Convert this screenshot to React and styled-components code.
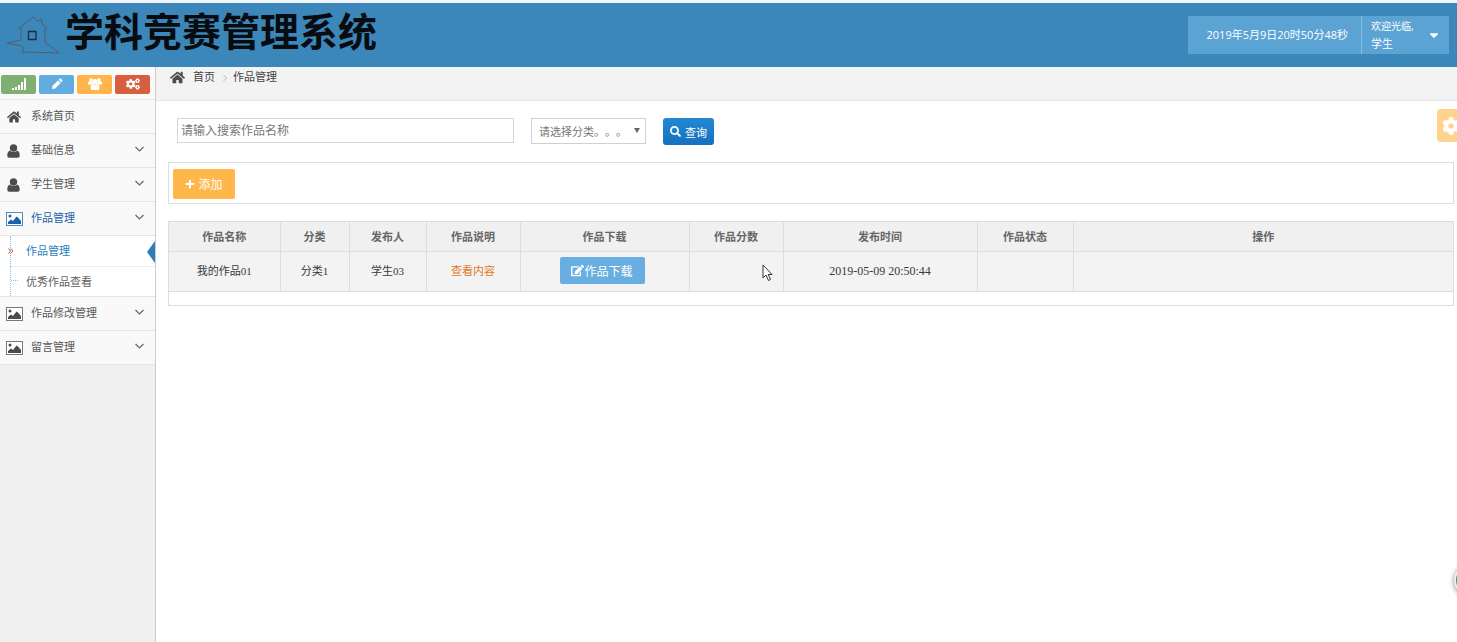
import React from 'react'
import styled, { createGlobalStyle, css } from 'styled-components'
import { FaCogs, FaCog, FaHome, FaSearch, FaPlus, FaEdit, FaCaretDown } from 'react-icons/fa'

const GlobalStyle = createGlobalStyle`
    * { box-sizing: border-box; }
    body {
        margin: 0;
        overflow-x: hidden;
        background: #fff;
        color: #393939;
        font: 11px/18px "Open Sans", "Noto Sans CJK SC", sans-serif;
    }
    button, input, select { font-family: inherit; }
    a { color: inherit; text-decoration: none; }
    svg { display: block; flex: none; }
`

const PageStyle = styled.div`
    display: flex;
    flex-direction: column;
    min-height: 100vh;
    border-top: 3px solid #f1f5f7;
`

const HeaderStyle = styled.header`
    display: flex;
    justify-content: space-between;
    align-items: center;
    height: 64px;
    padding: 0 8px 0 6px;
    background: #3b87b9;
`
const BrandStyle = styled.a`
    display: flex;
    align-items: center;
    gap: 5px;
`
const TitleStyle = styled.h1`
    margin: 0 0 12px;
    color: #080b10;
    font: bold 39px/44px "Noto Sans CJK SC", sans-serif;
`
const HeaderInfoStyle = styled.div`
    display: flex;
    height: 38px;
    color: #fff;
`
const ClockStyle = styled.div`
    display: flex;
    align-items: center;
    padding: 0 13px 0 19px;
    border-right: 1px solid #7ec3ea;
    background: #5ba3d3;
`
const UserButtonStyle = styled.button`
    display: flex;
    align-items: center;
    justify-content: space-between;
    width: 87px;
    padding: 0 8px 0 9px;
    border: 0;
    background: #5ba3d3;
    color: #fff;
    font-size: 11px;
    line-height: 18px;
    text-align: left;
`
const WelcomeStyle = styled.small`
    display: block;
    font-size: 10px;
`

const BodyStyle = styled.div`
    flex: 1;
    display: flex;
`
const SidebarStyle = styled.aside`
    flex: 0 0 156px;
    border-right: 1px solid #ccc;
    background: #f0f0f0;
`
const ShortcutsStyle = styled.div`
    display: flex;
    align-items: center;
    gap: 3px;
    height: 33px;
    padding: 2px 0 0 1px;
    border-bottom: 1px solid #e5e5e5;
    background: #fafafa;
`
const ShortcutStyle = styled.button`
    display: flex;
    align-items: center;
    justify-content: center;
    width: 35px;
    height: 19px;
    padding: 0;
    border: 0;
    border-radius: 2px;
    background: ${props => props.$color};
    color: #fff;
`

const MenuStyle = styled.ul`
    margin: 0;
    padding: 0;
    list-style: none;
`
const MenuLinkStyle = styled.a`
    display: flex;
    align-items: center;
    height: 33px;
    padding: 0 10px 2px 6px;
    background: #f9f9f9;
    color: #585858;
    ${props => props.$active && css`
        color: #1963aa;
    `}
`
const MenuItemStyle = styled.li`
    border-bottom: 1px solid #e5e5e5;
`
const MenuIconStyle = styled.span`
    flex: 0 0 25px;
    padding-left: ${props => props.$wide ? 0 : 1}px;
    padding-top: 3px;
    color: ${props => props.$active ? '#1963aa' : '#4c4c4c'};
    font-size: 14px;
`
const MenuTextStyle = styled.span`
    flex: 1;
`
const SubmenuStyle = styled.ul`
    margin: 0;
    padding: 0 0 0 10px;
    border-top: 1px solid #e5e5e5;
    background: #fff;
    list-style: none;
`
const SubItemStyle = styled.li`
    position: relative;
    border-left: 1px dotted #8fc3e6;

    & + & a {
        border-top: 1px solid #eee;
    }
`
const SubLinkStyle = styled.a`
    display: flex;
    align-items: center;
    height: 30px;
    padding-left: 15px;
    color: ${props => props.$active ? '#2b7dbc' : '#616161'};
`
const SubMarkStyle = styled.span`
    position: absolute;
    left: -3px;
    top: 12px;
    color: #c86139;
`
const SubDashStyle = styled.span`
    position: absolute;
    left: 0;
    top: 14px;
    width: 7px;
    border-top: 1px dotted #8fc3e6;
`
const ActiveArrowStyle = styled.span`
    position: absolute;
    right: 0;
    top: 5px;
    border: solid transparent;
    border-width: 11px 8px 11px 0;
    border-right-color: #2b7dbc;
`

const MainStyle = styled.main`
    flex: 1;
    min-width: 0;
`
const BreadcrumbStyle = styled.nav`
    display: flex;
    align-items: flex-start;
    height: 34px;
    padding: 1px 14px;
    border-bottom: 1px solid #e5e5e5;
    background: #f4f3f4;
    color: #444;
`
const CrumbIconStyle = styled.span`
    padding: 2px 8px 0 0;
    color: #4c4c4c;
    font-size: 15px;
`
const CrumbSepStyle = styled.span`
    padding: 6px 6px 0 8px;
    color: #b2b6bf;
`
const ContentStyle = styled.div`
    padding: 17px 3px 0 12px;
`
const SearchFormStyle = styled.form`
    display: flex;
    align-items: flex-start;
    gap: 17px;
    height: 27px;
    margin: 0 0 17px 9px;
`
const SearchInputStyle = styled.input`
    width: 337px;
    height: 25px;
    padding: 0 3px;
    border: 1px solid #d5d5d5;
    background: #fff;
    font-size: 12px;

    &::placeholder {
        color: #777;
        opacity: 1;
    }
`
const SelectWrapStyle = styled.div`
    position: relative;
`
const SelectStyle = styled.select`
    display: block;
    width: 115px;
    height: 26px;
    padding: 0 7px;
    border: 1px solid #d0d0d0;
    border-radius: 0;
    background: #fff;
    color: #777;
    font-size: 11px;
    text-spacing-trim: space-all;
    appearance: none;
`
const SelectArrowStyle = styled.span`
    position: absolute;
    right: 6px;
    top: 10px;
    border: solid transparent;
    border-width: 5px 3px 0;
    border-top-color: #666;
    pointer-events: none;
`
const QueryButtonStyle = styled.button`
    display: flex;
    align-items: center;
    gap: 4px;
    height: 27px;
    padding: 0 7px;
    border: 0;
    border-radius: 3px;
    background: linear-gradient(#2389d4, #1670bd);
    color: #fff;
    font-size: 11px;
`
const ToolbarStyle = styled.div`
    height: 42px;
    margin-bottom: 17px;
    padding: 6px 4px;
    border: 1px solid #ddd;
`
const AddButtonStyle = styled.button`
    display: flex;
    align-items: center;
    justify-content: center;
    gap: 3px;
    width: 62px;
    height: 30px;
    padding: 0;
    border: 0;
    border-radius: 2px;
    background: #ffb74b;
    color: #fff;
    font-size: 12px;
`

const TableBoxStyle = styled.div`
    padding-bottom: 13px;
    border: 1px solid #ddd;
`
const TableStyle = styled.table`
    width: 100%;
    table-layout: fixed;
    border-collapse: collapse;
    font-family: "Liberation Serif", "Noto Sans CJK SC", serif;
    text-align: center;
`
const ColStyle = styled.col`
    width: ${props => props.$width};
`
const HeadCellStyle = styled.th`
    height: 29px;
    padding: 0;
    border: 1px solid #ddd;
    border-width: 0 0 1px 1px;
    background: #f0f0f0;
    color: #666;
    font: bold 11px/18px "Noto Sans CJK SC", sans-serif;

    &:first-child { border-left: 0; }
`
const CellStyle = styled.td`
    height: 40px;
    padding: 0 0 1px;
    border: 1px solid #ddd;
    border-width: 0 0 1px 1px;
    background: #f3f3f3;
    font-size: ${props => props.$time ? 12 : 11}px;

    &:first-child { border-left: 0; }
`
const ViewLinkStyle = styled.a`
    color: #e0791f;
`
const DownloadButtonStyle = styled.button`
    display: inline-flex;
    align-items: center;
    height: 27px;
    margin-right: 4px;
    padding: 0 12px 0 11px;
    border: 0;
    border-radius: 2px;
    background: #68aee0;
    color: #fff;
    font: 12px/18px "Noto Sans CJK SC", sans-serif;
    vertical-align: middle;
`

const SettingsTabStyle = styled.button`
    position: absolute;
    right: 0;
    top: 109px;
    width: 20px;
    height: 33px;
    padding: 0 0 0 5px;
    border: 0;
    border-radius: 4px 0 0 4px;
    overflow: hidden;
    background: #ffd28e;
    color: #fff;
    font-size: 18px;
`
const FloatBallStyle = styled.div`
    position: fixed;
    right: -31px;
    top: 563px;
    width: 34px;
    height: 34px;
    border: 2px solid #eee;
    border-radius: 50%;
    background: #1fa073;
    box-shadow: 0 1px 5px #888;
`
const PointerStyle = styled.svg`
    position: absolute;
    left: 762px;
    top: 264px;
    pointer-events: none;
`

const HouseLogo = () => (
    <svg width="54" height="40" viewBox="0 0 54 40" fill="none" stroke="#565b66" strokeWidth="1">
        <path d="M12 14L27 2L32 6L35 4L36 9L41 13L39 14V27L53 38L16 37L18 33L15 31L1 28L15 25V13" />
        <path d="M22.500 16.500H30V24.500H22.500Z" stroke="#252a35" strokeWidth="1.300" />
    </svg>
)

const PictureIcon = () => (
    <svg width="17" height="14" viewBox="0 0 17 14">
        <rect x="0.5" y="0.5" width="16" height="13" fill="#fff" stroke="currentColor" strokeOpacity="0.75" />
        <circle cx="4" cy="4" r="1.500" fill="currentColor" />
        <path d="M2 12V10L5 7.500L7 9L10.500 4.500L12 5.500L15 9V12Z" fill="currentColor" />
    </svg>
)

const UserIcon = () => (
    <svg width="13" height="14" viewBox="0 0 13 14" fill="currentColor">
        <circle cx="6.5" cy="4" r="3.700" />
        <path d="M3 6.500C1 7 0.300 9 0.300 11.500C0.300 13 1 13.700 2.500 13.700H10.500C12 13.700 12.700 13 12.700 11.500C12.700 9 12 7 10 6.500C8.500 8.500 4.500 8.500 3 6.500Z" />
    </svg>
)

const SignalIcon = () => (
    <svg width="14" height="12" viewBox="0 0 14 12" fill="currentColor">
        <path d="M0 10H2V12H0ZM3 9H5V12H3ZM6 7H8V12H6ZM9 4H11V12H9ZM12 0H14V12H12Z" />
    </svg>
)

const PencilIcon = () => (
    <svg width="12" height="12" viewBox="0 0 12 12" fill="currentColor">
        <path d="M1 11L1.600 7.800L7 2.400L9.600 5L4.200 10.400ZM7.700 1.700L8.700 0.700Q9.300 0.200 9.900 0.800L11.200 2.100Q11.800 2.700 11.200 3.300L10.300 4.300Z" />
    </svg>
)

const GroupIcon = () => (
    <svg width="14" height="12" viewBox="0 0 14 12" fill="currentColor">
        <circle cx="3" cy="2" r="1.800" />
        <circle cx="11" cy="2" r="1.800" />
        <circle cx="7" cy="3.700" r="2.600" />
        <path d="M0 6.500V5Q0 3.300 1.200 3.300H4L5 6.500ZM14 6.500V5Q14 3.300 12.800 3.300H10L9 6.500Z" />
        <path d="M4.500 5.800Q2.500 6.200 2.500 9.800Q2.500 12 4.300 12H9.700Q11.500 12 11.500 9.800Q11.500 6.200 9.500 5.800Q7 7.700 4.500 5.800Z" />
    </svg>
)

const ChevronDown = () => (
    <svg width="11" height="7" viewBox="0 0 11 7" fill="none" stroke="#666" strokeWidth="1.200">
        <path d="M1.500 1L5.500 5L9.500 1" />
    </svg>
)

const ChevronRight = () => (
    <svg width="4" height="8" viewBox="0 0 4 8" fill="none" stroke="currentColor">
        <path d="M0.500 1L3.500 4L0.500 7" />
    </svg>
)

const DoubleRight = () => (
    <svg width="6" height="6" viewBox="0 0 6 6" fill="none" stroke="currentColor">
        <path d="M0.500 0.500L2.500 3L0.500 5.500M3 0.500L5 3L3 5.500" />
    </svg>
)

const shortcuts = [
    { name: '统计', color: '#7fb072', icon: <SignalIcon /> },
    { name: '编辑', color: '#62addf', icon: <PencilIcon /> },
    { name: '用户', color: '#ffb54c', icon: <GroupIcon /> },
    { name: '设置', color: '#d75f3f', icon: <FaCogs size={14} /> }
]

const menu = [
    { text: '系统首页', icon: <FaHome /> },
    { text: '基础信息', icon: <UserIcon />, open: true },
    { text: '学生管理', icon: <UserIcon />, open: true },
    { text: '作品管理', icon: <PictureIcon />, wide: true, open: true, active: true, children: ['作品管理', '优秀作品查看'] },
    { text: '作品修改管理', icon: <PictureIcon />, wide: true, open: true },
    { text: '留言管理', icon: <PictureIcon />, wide: true, open: true }
]

const columns = [
    ['作品名称', '111px'],
    ['分类', '69px'],
    ['发布人', '77px'],
    ['作品说明', '94px'],
    ['作品下载', '169px'],
    ['作品分数', '94px'],
    ['发布时间', '194px'],
    ['作品状态', '96px'],
    ['操作', 'auto']
]

const rows = [
    { id: 1, name: '我的作品01', type: '分类1', author: '学生03', time: '2019-05-09 20:50:44' }
]

const Submenu = ({ items }) => (
    <SubmenuStyle>
        {items.map((text, i) => (
            <SubItemStyle key={text}>
                <SubLinkStyle href="#" $active={i === 0}>{text}</SubLinkStyle>
                {i === 0 ? <SubMarkStyle><DoubleRight /></SubMarkStyle> : <SubDashStyle />}
                {i === 0 && <ActiveArrowStyle />}
            </SubItemStyle>
        ))}
    </SubmenuStyle>
)

const Sidebar = () => (
    <SidebarStyle>
        <ShortcutsStyle>
            {shortcuts.map(s => (
                <ShortcutStyle key={s.name} $color={s.color} aria-label={s.name}>{s.icon}</ShortcutStyle>
            ))}
        </ShortcutsStyle>
        <MenuStyle>
            {menu.map(item => (
                <MenuItemStyle key={item.text}>
                    <MenuLinkStyle href="#" $active={item.active}>
                        <MenuIconStyle $wide={item.wide} $active={item.active}>{item.icon}</MenuIconStyle>
                        <MenuTextStyle>{item.text}</MenuTextStyle>
                        {item.open && <ChevronDown />}
                    </MenuLinkStyle>
                    {item.children && <Submenu items={item.children} />}
                </MenuItemStyle>
            ))}
        </MenuStyle>
    </SidebarStyle>
)

const WorksTable = () => (
    <TableBoxStyle>
        <TableStyle>
            <colgroup>
                {columns.map(([title, width]) => <ColStyle key={title} $width={width} />)}
            </colgroup>
            <thead>
                <tr>
                    {columns.map(([title]) => <HeadCellStyle key={title}>{title}</HeadCellStyle>)}
                </tr>
            </thead>
            <tbody>
                {rows.map(row => (
                    <tr key={row.id}>
                        <CellStyle>{row.name}</CellStyle>
                        <CellStyle>{row.type}</CellStyle>
                        <CellStyle>{row.author}</CellStyle>
                        <CellStyle><ViewLinkStyle href="#">查看内容</ViewLinkStyle></CellStyle>
                        <CellStyle>
                            <DownloadButtonStyle><FaEdit size={13} />作品下载</DownloadButtonStyle>
                        </CellStyle>
                        <CellStyle />
                        <CellStyle $time>{row.time}</CellStyle>
                        <CellStyle />
                        <CellStyle />
                    </tr>
                ))}
            </tbody>
        </TableStyle>
    </TableBoxStyle>
)

class App extends React.Component {
    handleSubmit = (e) => {
        e.preventDefault()
    }

    render() {
        return (
            <PageStyle>
                <GlobalStyle />
                <HeaderStyle>
                    <BrandStyle href="#">
                        <HouseLogo />
                        <TitleStyle>学科竞赛管理系统</TitleStyle>
                    </BrandStyle>
                    <HeaderInfoStyle>
                        <ClockStyle>2019年5月9日20时50分48秒</ClockStyle>
                        <UserButtonStyle>
                            <span>
                                <WelcomeStyle>欢迎光临,</WelcomeStyle>
                                学生
                            </span>
                            <FaCaretDown size={14} />
                        </UserButtonStyle>
                    </HeaderInfoStyle>
                </HeaderStyle>

                <BodyStyle>
                    <Sidebar />
                    <MainStyle>
                        <BreadcrumbStyle>
                            <CrumbIconStyle><FaHome /></CrumbIconStyle>
                            <a href="#">首页</a>
                            <CrumbSepStyle><ChevronRight /></CrumbSepStyle>
                            <span>作品管理</span>
                        </BreadcrumbStyle>
                        <ContentStyle>
                            <SearchFormStyle onSubmit={this.handleSubmit}>
                                <SearchInputStyle type="text" aria-label="作品名称" placeholder="请输入搜索作品名称" />
                                <SelectWrapStyle>
                                    <SelectStyle aria-label="分类">
                                        <option>请选择分类。。。</option>
                                    </SelectStyle>
                                    <SelectArrowStyle />
                                </SelectWrapStyle>
                                <QueryButtonStyle type="submit"><FaSearch />查询</QueryButtonStyle>
                            </SearchFormStyle>
                            <ToolbarStyle>
                                <AddButtonStyle><FaPlus size={10} />添加</AddButtonStyle>
                            </ToolbarStyle>
                            <WorksTable />
                        </ContentStyle>
                    </MainStyle>
                </BodyStyle>

                <SettingsTabStyle aria-label="设置"><FaCog /></SettingsTabStyle>
                <FloatBallStyle />
                <PointerStyle width="12" height="18" viewBox="0 0 12 18">
                    <path d="M1 1V14L4 11L6.500 16.500L8.500 15.500L6.200 10.500H10Z" fill="#fff" stroke="#333" />
                </PointerStyle>
            </PageStyle>
        )
    }
}

export default App
